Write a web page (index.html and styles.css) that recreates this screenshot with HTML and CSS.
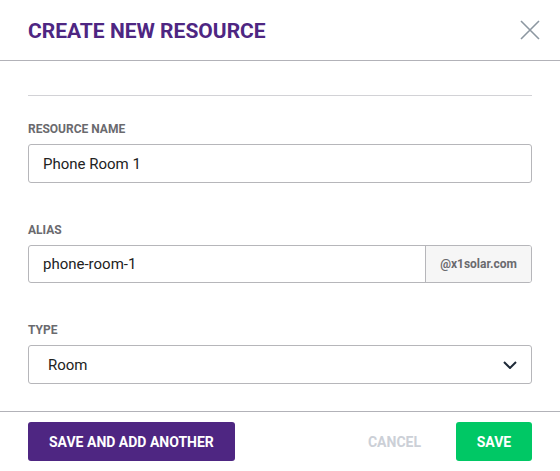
FILE: index.html
```html
<!DOCTYPE html>
<html lang="en">
<head>
<meta charset="utf-8">
<title>Create New Resource</title>
<link rel="stylesheet" href="styles.css">
</head>
<body>
<div class="modal">
  <header class="modal-header">
    <h1 class="modal-title">CREATE NEW RESOURCE</h1>
    <button class="close-btn" aria-label="Close">
      <svg width="20" height="20" viewBox="0 0 20 20"><path d="M1 1 L19 19 M19 1 L1 19" stroke="#8c97a1" stroke-width="1.6" fill="none"/></svg>
    </button>
  </header>
  <div class="modal-body">
    <hr class="divider">
    <div class="field">
      <label class="field-label">RESOURCE NAME</label>
      <div class="input">Phone Room 1</div>
    </div>
    <div class="field">
      <label class="field-label">ALIAS</label>
      <div class="input-group">
        <div class="input grow">phone-room-1</div>
        <div class="addon">@x1solar.com</div>
      </div>
    </div>
    <div class="field last">
      <label class="field-label">TYPE</label>
      <div class="input select">
        <span>Room</span>
        <svg width="14" height="8" viewBox="0 0 14 8"><path d="M1 1 L7 7 L13 1" stroke="#1e2a38" stroke-width="2" fill="none"/></svg>
      </div>
    </div>
  </div>
  <footer class="modal-footer">
    <button class="btn btn-purple">SAVE AND ADD ANOTHER</button>
    <div class="footer-right">
      <button class="btn btn-cancel">CANCEL</button>
      <button class="btn btn-green">SAVE</button>
    </div>
  </footer>
</div>
</body>
</html>
```

FILE: styles.css
```css
html, body {
  margin: 0;
  padding: 0;
  background: #ffffff;
}
body {
  font-family: Roboto, "Liberation Sans", sans-serif;
  color: #222222;
}
.modal {
  width: 560px;
  height: 471px;
  display: flex;
  flex-direction: column;
}
.modal-header {
  height: 61px;
  box-sizing: border-box;
  padding: 0 20px 0 28px;
  display: flex;
  align-items: center;
  justify-content: space-between;
  border-bottom: 1px solid #b2b2b8;
}
.modal-title {
  margin: 0;
  font-size: 21px;
  line-height: 24px;
  font-weight: 700;
  color: #4e2682;
  padding-top: 1px;
}
.close-btn {
  border: 0;
  background: none;
  padding: 0;
  width: 20px;
  height: 20px;
  display: flex;
}
.modal-body {
  padding: 0 28px 26px;
  flex: 1;
}
.divider {
  margin: 34px 0 26px;
  border: 0;
  border-top: 1px solid #d2d2d6;
  height: 0;
}
.field {
  margin-bottom: 40px;
}
.field.last {
  margin-bottom: 0;
}
.field-label {
  display: block;
  font-size: 12px;
  line-height: 14px;
  font-weight: 700;
  color: #6a6a6e;
  margin-bottom: 8px;
}
.input {
  height: 39px;
  box-sizing: border-box;
  border: 1px solid #b6b6ba;
  border-radius: 3px;
  padding: 0 14px;
  display: flex;
  align-items: center;
  font-size: 15px;
  color: #222222;
}
.input-group {
  display: flex;
  height: 38px;
  border: 1px solid #b6b6ba;
  border-radius: 3px;
  box-sizing: border-box;
  overflow: hidden;
}
.input-group .input {
  border: 0;
  border-radius: 0;
  height: 100%;
}
.grow {
  flex: 1;
}
.addon {
  width: 106px;
  box-sizing: border-box;
  background: #f6f6f6;
  border-left: 1px solid #b6b6ba;
  display: flex;
  align-items: center;
  justify-content: center;
  font-size: 12px;
  font-weight: 700;
  color: #6a6a6e;
}
.select {
  padding: 0 14px 0 19px;
  justify-content: space-between;
}
.modal-footer {
  border-top: 1px solid #b2b2b8;
  padding: 10px 28px;
  display: flex;
  justify-content: space-between;
  align-items: center;
}
.footer-right {
  display: flex;
  align-items: center;
  gap: 14px;
}
.btn {
  height: 39px;
  border: 0;
  border-radius: 3px;
  padding: 0 21px;
  font-family: Roboto, "Liberation Sans", sans-serif;
  font-size: 14px;
  font-weight: 700;
  background: none;
  cursor: pointer;
}
.btn-purple {
  background: #4e2682;
  color: #ffffff;
}
.btn-cancel {
  color: #ccd0d7;
}
.btn-green {
  background: #00c865;
  color: #ffffff;
  width: 76px;
  padding: 0;
}
```
